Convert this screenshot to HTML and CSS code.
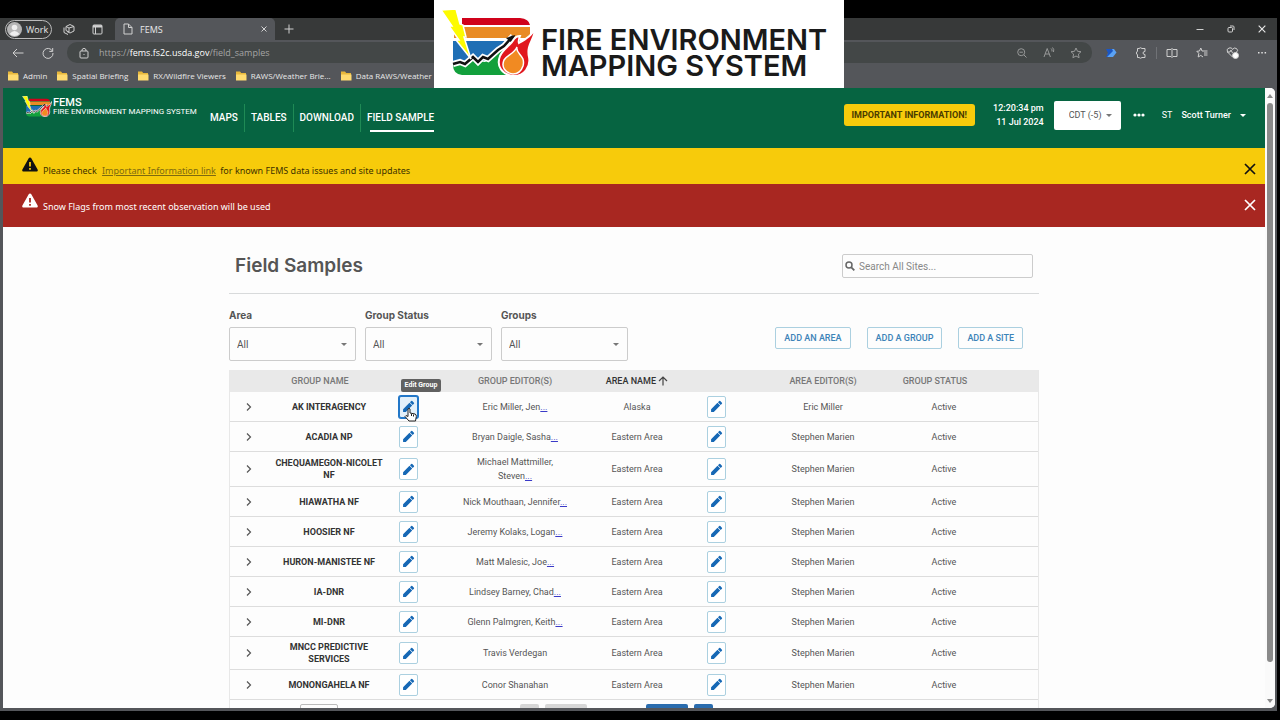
FILE: index.html
```html
<!DOCTYPE html>
<html lang="en">
<head>
  <meta charset="UTF-8">
  <title>FEMS</title>
  <link rel="stylesheet" href="styles.css">
</head>
<body>

  <!-- Icons -->
  <svg class="sprite" width="0" height="0">
    <symbol id="i-folder" viewBox="0 0 12 11"><path d="M1 1.500h4l1.200 1.500H11v7H1z" fill="#e8b83c"/><path d="M1 4.500h10.500V10.500H1z" fill="#ffdb70"/></symbol>
    <symbol id="i-pencil" viewBox="0 0 24 24"><path fill="currentColor" d="M2 17V22h5L18.800 10.200l-5-5zM22 7a1.400 1.400 0 0 0 0-2L19 2a1.400 1.400 0 0 0-2 0l-2.300 2.300 5 5z"/></symbol>
    <symbol id="i-chevron" viewBox="0 0 8 10"><path d="M2 1.500l3.500 3.500L2 8.500" fill="none" stroke="currentColor" stroke-width="1.200"/></symbol>
    <symbol id="i-close" viewBox="0 0 12 12"><path d="M1 1l10 10M11 1L1 11" fill="none" stroke="currentColor" stroke-width="1.700"/></symbol>
    <symbol id="i-warn" viewBox="0 0 16 15"><path fill="currentColor" d="M8 0.500c.6 0 1 .3 1.300.8l6.300 11.200c.6 1-.1 2-1.200 2H1.600c-1.100 0-1.800-1-1.200-2L6.700 1.300C7 .8 7.400.5 8 .5z"/><path class="warn-mark" d="M8 5v4.500M8 11v1.800" stroke-width="1.800"/></symbol>
    <symbol id="i-fems" viewBox="0 0 96 68">
      <path d="M22 9H80Q89 10 90 16H22z" fill="#d0021b"/>
      <path d="M14 18H90V29H14z" fill="#e98b25"/>
      <path d="M13 32H88V52H13z" fill="#1f6fb5"/>
      <path d="M13 56L30 51 45 53 60 42 80 28V66H22Q13 65 13 56z" fill="#12a03c"/>
      <path d="M13 55l7-2 5 2 8-7 5 5 5-5 5 2 10-9 6-4 9-10" fill="none" stroke="#fff" stroke-width="6"/>
      <path d="M13 55l7-2 5 2 8-7 5 5 5-5 5 2 10-9 6-4 9-10" fill="none" stroke="#111" stroke-width="2.600"/>
      <path d="M66 29l9-3-2 9z" fill="#111"/>
      <path d="M95 18C96 30 86 34 89 48 91 58 84 67 74 67 62 66 56 57 60 47 63 40 71 36 74 30 76 27 79 27 80 27 79 30 78 32 79 34 86 30 93 26 95 18z" fill="#e1171e" stroke="#fff" stroke-width="2"/>
      <path d="M77 38C75 45 86 46 83 57 81 63 77 65 73 65 65 64 61 58 64 51 67 46 74 45 77 38z" fill="#f18a22" stroke="#fff" stroke-width="1.500"/>
      <path d="M1 1L16 0 20 15 23 16 26 28 24 28 31 50 16 31 19 31 9 17 12 17z" fill="#fdfb00" stroke="#fff" stroke-width="1.500"/>
    </symbol>
  </svg>

  <div class="window">

    <!-- Tabs -->
    <div class="tabs">
      <button class="profile">
        <svg width="15" height="15" viewBox="0 0 15 15"><circle cx="7.500" cy="7.500" r="7.500" fill="#b5b5b5"/><circle cx="7.500" cy="5.500" r="2.800" fill="#eee"/><path d="M2.500 12q5-6 10 0-5 4-10 0z" fill="#eee"/></svg>
        Work
      </button>
      <div class="tabs__tools">
        <svg width="12" height="12" viewBox="0 0 12 12" class="line"><path d="M3 3.500l4-2 4 2v4.500l-4 2-3-1.500M3 3.500v4l3 1.500V5zM6 5l5-1.500M1 4.500v5l4 2"/></svg>
        <svg width="11" height="11" viewBox="0 0 11 11" class="line"><rect x="1" y="1" width="9" height="9" rx="1"/><path d="M1 2.300h9" stroke-width="2.400"/><path d="M3.500 3v7"/></svg>
      </div>
      <div class="tab">
        <svg width="10" height="12" viewBox="0 0 10 12" class="line"><path d="M1 1h4.500L9 4.500V11H1zM5.500 1v3.500H9"/></svg>
        <span class="tab__title">FEMS</span>
        <svg width="6" height="6"><use href="#i-close"/></svg>
      </div>
      <svg class="plus line" width="10" height="10" viewBox="0 0 10 10"><path d="M5 0.500v9M0.500 5h9"/></svg>
      <div class="controls">
        <svg width="8" height="8" viewBox="0 0 8 8" class="line"><path d="M0.500 4.500h7"/></svg>
        <svg width="8" height="8" viewBox="0 0 8 8" class="line"><rect x="1" y="2.500" width="4.500" height="4.500" rx="1"/><path d="M3 1h3q1 0 1 1v3"/></svg>
        <svg width="8" height="8"><use href="#i-close"/></svg>
      </div>
    </div>

    <!-- Address bar -->
    <div class="toolbar">
      <div class="toolbar__nav">
        <svg width="12" height="10" viewBox="0 0 12 10" class="line"><path d="M11.500 5H1M5 1L1 5l4 4"/></svg>
        <svg width="12" height="12" viewBox="0 0 12 12" class="line"><path d="M10.500 4.200A5 5 0 1 0 11 6M10.700 1v3.400H7.300"/></svg>
      </div>
      <div class="address">
        <svg width="10" height="12" viewBox="0 0 10 12" class="line"><rect x="1" y="4" width="8" height="7" rx="1"/><path d="M3 4V2.500q2-2.500 4 0V4M5 7v1"/></svg>
        <span class="address__url">https://<b>fems.fs2c.usda.gov</b>/field_samples</span>
        <div class="address__tools">
          <svg width="10" height="10" viewBox="0 0 10 10" class="line"><circle cx="4.200" cy="4.200" r="3.500"/><path d="M7 7l2.500 2.500M2.500 4.200h3.400"/></svg>
          <svg width="12" height="11" viewBox="0 0 12 11" class="line"><path d="M1 10l3.200-8.500L7.400 10M2.200 7h4M8 1.500q1.500 1 1 3M9.500 0.500q2 2 1 4.500"/></svg>
          <svg width="12" height="12" viewBox="0 0 12 12" class="line"><path d="M6 1l1.500 3.300 3.500.4-2.600 2.400.7 3.600L6 9l-3.100 1.700.7-3.600L1 4.700l3.500-.4z"/></svg>
        </div>
      </div>
      <div class="toolbar__ext">
        <svg width="12" height="10" viewBox="0 0 12 10"><path d="M4 1h5l2.500 3.500L8 9H2z" fill="#5aa2f5"/><path d="M1 1h6l1 2-6 6H1l2-4z" fill="#1b56c4"/></svg>
        <svg width="12" height="12" viewBox="0 0 12 12" class="line"><path d="M4 1.500q1.500-1.500 3 0h3v3q-2 0-2 1.500T10 7.500v3H7q-1.500 1.500-3 0H2.500V8Q0 6 2.500 4V1.500z"/></svg>
      </div>
      <div class="toolbar__ext toolbar__ext--split">
        <svg width="12" height="10" viewBox="0 0 12 10" class="line"><path d="M5 1.500H1v7h4M7 1.500h4v7H7M6 0v10"/></svg>
        <svg width="12" height="11" viewBox="0 0 12 11" class="line"><path d="M8 4L6 4 4.800 1 3.500 4 .8 4.300l2 2L2.200 10l2.600-1.600L7 10M8 4h3.500M8 6h3.500M8 8h3.500"/></svg>
        <svg width="13" height="12" viewBox="0 0 13 12" class="line"><path d="M6.500 10L1.500 5Q0 2 3 1t3.500 1.500Q8 0 10.500 1.500T10 6M1 5h3l1-2 1.500 3"/><circle cx="9.500" cy="8.500" r="3" fill="#fff"/></svg>
        <svg width="10" height="4" viewBox="0 0 10 4"><path d="M1 1h1.500v1.500H1zM4.300 1h1.500v1.500H4.300zM7.600 1h1.500v1.500H7.600z" fill="#e0e0e0"/></svg>
      </div>
    </div>

    <!-- Bookmarks -->
    <div class="bookmarks">
      <a href="#"><svg width="12" height="11"><use href="#i-folder"/></svg>Admin</a>
      <a href="#"><svg width="12" height="11"><use href="#i-folder"/></svg>Spatial Briefing</a>
      <a href="#"><svg width="12" height="11"><use href="#i-folder"/></svg>RX/Wildfire Viewers</a>
      <a href="#"><svg width="12" height="11"><use href="#i-folder"/></svg>RAWS/Weather Brie...</a>
      <a href="#"><svg width="12" height="11"><use href="#i-folder"/></svg>Data RAWS/Weather</a>
    </div>

    <div class="viewport">
      <div class="page">

        <!-- Header -->
        <header class="header">
          <div class="logo">
            <svg width="30" height="21"><use href="#i-fems"/></svg>
            <div class="logo__text"><strong>FEMS</strong><span>FIRE ENVIRONMENT MAPPING SYSTEM</span></div>
          </div>
          <nav class="nav">
            <a href="#">MAPS</a>
            <a href="#">TABLES</a>
            <a href="#">DOWNLOAD</a>
            <a href="#" class="active">FIELD SAMPLE</a>
          </nav>
          <div class="header__right">
            <button class="info-btn">IMPORTANT INFORMATION!</button>
            <div class="clock">12:20:34 pm<br>11 Jul 2024</div>
            <div class="select select--zone">
              <select aria-label="CDT (-5)"><option>CDT (-5)</option></select>
            </div>
            <svg width="12" height="4" viewBox="0 0 12 4"><circle cx="2" cy="2" r="1.600" fill="#fff"/><circle cx="6" cy="2" r="1.600" fill="#fff"/><circle cx="10" cy="2" r="1.600" fill="#fff"/></svg>
            <span class="initials">ST</span>
            <button class="user">Scott Turner</button>
          </div>
        </header>

        <!-- Alerts -->
        <div class="alert alert--yellow">
          <svg width="16" height="15"><use href="#i-warn"/></svg>
          <p>Please check <a href="#">Important Information link</a> for known FEMS data issues and site updates</p>
          <button class="alert__close"><svg width="12" height="12"><use href="#i-close"/></svg></button>
        </div>
        <div class="alert alert--red">
          <svg width="16" height="15"><use href="#i-warn"/></svg>
          <p>Snow Flags from most recent observation will be used</p>
          <button class="alert__close"><svg width="12" height="12"><use href="#i-close"/></svg></button>
        </div>

        <main class="content">
          <div class="content__head">
            <h1>Field Samples</h1>
            <label class="search">
              <svg width="10" height="10" viewBox="0 0 10 10"><circle cx="4" cy="4" r="3" fill="none" stroke="#666" stroke-width="1.500"/><path d="M6.300 6.300L9.300 9.300" stroke="#666" stroke-width="1.800"/></svg>
              <input type="text" placeholder="Search All Sites...">
            </label>
          </div>

          <!-- Filters -->
          <div class="filters">
            <div class="filter">
              <label for="area">Area</label>
              <div class="select"><select id="area"><option>All</option></select></div>
            </div>
            <div class="filter">
              <label for="status">Group Status</label>
              <div class="select"><select id="status"><option>All</option></select></div>
            </div>
            <div class="filter">
              <label for="groups">Groups</label>
              <div class="select"><select id="groups"><option>All</option></select></div>
            </div>
            <div class="actions">
              <button>ADD AN AREA</button>
              <button>ADD A GROUP</button>
              <button>ADD A SITE</button>
            </div>
          </div>

          <!-- Groups table -->
          <table class="groups">
            <colgroup>
              <col class="c-open"><col class="c-name"><col class="c-edit"><col class="c-editors">
              <col class="c-area"><col class="c-edit2"><col class="c-areaed"><col class="c-status">
            </colgroup>
            <thead>
              <tr>
                <th></th>
                <th class="shift">GROUP NAME</th>
                <th></th>
                <th>GROUP EDITOR(S)</th>
                <th class="sorted">AREA NAME <svg width="10" height="10" viewBox="0 0 10 10"><path d="M5 9.500V1M1 5l4-4 4 4" fill="none" stroke="#444" stroke-width="1.200"/></svg></th>
                <th></th>
                <th>AREA EDITOR(S)</th>
                <th class="status shift">GROUP STATUS</th>
              </tr>
            </thead>
            <tbody id="rows"></tbody>
          </table>

          <div class="pager">
            <select class="pager__size"></select>
            <button class="pager__first" disabled></button>
            <button class="pager__prev" disabled></button>
            <button class="pager__next"></button>
            <button class="pager__last"></button>
          </div>
        </main>
      </div>

      <!-- Scrollbar -->
      <div class="scroll">
        <span class="scroll__up"></span>
        <span class="scroll__thumb"></span>
        <span class="scroll__down"></span>
      </div>
    </div>
  </div>

  <div class="banner">
    <svg width="96" height="68"><use href="#i-fems"/></svg>
    <div>FIRE ENVIRONMENT<br>MAPPING SYSTEM</div>
  </div>

  <script>
    // name, editors, has more editors, area, area editor
    const groups = [
      ["AK INTERAGENCY", "Eric Miller, Jen", true, "Alaska", "Eric Miller"],
      ["ACADIA NP", "Bryan Daigle, Sasha", true, "Eastern Area", "Stephen Marien"],
      ["CHEQUAMEGON-NICOLET NF", "Michael Mattmiller, Steven", true, "Eastern Area", "Stephen Marien"],
      ["HIAWATHA NF", "Nick Mouthaan, Jennifer", true, "Eastern Area", "Stephen Marien"],
      ["HOOSIER NF", "Jeremy Kolaks, Logan", true, "Eastern Area", "Stephen Marien"],
      ["HURON-MANISTEE NF", "Matt Malesic, Joe", true, "Eastern Area", "Stephen Marien"],
      ["IA-DNR", "Lindsey Barney, Chad", true, "Eastern Area", "Stephen Marien"],
      ["MI-DNR", "Glenn Palmgren, Keith", true, "Eastern Area", "Stephen Marien"],
      ["MNCC PREDICTIVE SERVICES", "Travis Verdegan", false, "Eastern Area", "Stephen Marien"],
      ["MONONGAHELA NF", "Conor Shanahan", false, "Eastern Area", "Stephen Marien"]
    ];

    const pencil = '<svg width="13" height="13"><use href="#i-pencil"/></svg>';
    const hover = `<span class="tooltip">Edit Group</span>
      <svg class="cursor" width="13" height="16" viewBox="0 0 13 16"><path d="M4 9V2q1-1.500 2 0v4l5 1q1.500.5 1.300 2.500L11.500 14H5L1 9.500Q1.500 7.500 4 9.500z" fill="#fff" stroke="#222"/><path d="M7.500 7v2M9.500 7.500v2" stroke="#222"/></svg>`;

    document.getElementById("rows").innerHTML = groups.map((g, i) => `
      <tr>
        <td><svg width="8" height="10"><use href="#i-chevron"/></svg></td>
        <td class="name">${g[0]}</td>
        <td><div class="edit-wrap"><button class="edit ${i === 0 ? "edit--focus" : ""}">${pencil}</button>${i === 0 ? hover : ""}</div></td>
        <td class="editors">${g[1]}${g[2] ? '<a href="#">...</a>' : ""}</td>
        <td>${g[3]}</td>
        <td><button class="edit">${pencil}</button></td>
        <td>${g[4]}</td>
        <td class="status">Active</td>
      </tr>`).join("");
  </script>
</body>
</html>
```

FILE: styles.css
```css
* {
  box-sizing: border-box;
}

body {
  margin: 0;
  height: 100vh;
  padding: 18px 3px 9px 0;
  background: #000;
  font-family: Roboto, "Liberation Sans", sans-serif;
  font-size: 9px;
  overflow: hidden;
}

svg {
  display: block;
  flex: none;
}

.sprite {
  position: absolute;
}

button,
select,
input {
  font: inherit;
  color: inherit;
  margin: 0;
  padding: 0;
  border: 0;
  background: none;
}

.line {
  fill: none;
  stroke: #d0d0d0;
  stroke-width: 1;
}

/* Browser window */
.window {
  height: 100%;
  display: flex;
  flex-direction: column;
  padding: 0 2px 3px 3px;
  background: #54565a;
}

.tabs,
.toolbar,
.bookmarks {
  display: flex;
  align-items: center;
  flex: none;
  margin: 0 -2px 0 -3px;
  font-family: "Open Sans", "Noto Sans", sans-serif;
  color: #e8e8e8;
}

.tabs {
  height: 22px;
  padding-left: 5px;
  background: #373939;
}

.profile {
  display: flex;
  align-items: center;
  gap: 4px;
  width: 47px;
  height: 19px;
  padding-left: 1px;
  border: 1px solid #bbb;
  border-radius: 10px;
}

.tabs__tools {
  display: flex;
  align-items: center;
  gap: 17px;
  width: 63px;
  padding-left: 11px;
}

.tab {
  display: flex;
  align-items: center;
  gap: 7px;
  width: 160px;
  height: 22px;
  padding: 0 8px;
  border-radius: 5px 5px 0 0;
  background: #54565a;
}

.tab__title {
  flex: 1;
}

.plus {
  margin-left: 9px;
}

.controls {
  display: flex;
  gap: 23px;
  margin-left: auto;
  padding-right: 11px;
}

.toolbar {
  height: 25px;
}

.toolbar__nav {
  display: flex;
  align-items: center;
  gap: 18px;
  width: 67px;
  padding-left: 12px;
}

.address {
  flex: 1;
  display: flex;
  align-items: center;
  gap: 10px;
  height: 21px;
  padding: 0 3px 0 12px;
  border-radius: 10px;
  background: #434747;
}

.address__url {
  margin-right: auto;
  color: #a5a5a5;
}

.address__url b {
  font-weight: 400;
  color: #fff;
}

.address__tools,
.toolbar__ext {
  display: grid;
  grid-auto-flow: column;
  grid-auto-columns: 27px;
  place-items: center;
}

.address__tools {
  opacity: 0.6;
}

.toolbar__ext {
  grid-auto-columns: 30px;
  margin-left: 4px;
}

.toolbar__ext--split {
  margin-left: 0;
  border-left: 1px solid #707276;
}

.bookmarks {
  gap: 9px;
  height: 23px;
  padding: 0 0 2px 7px;
  font-size: 8px;
}

.bookmarks a {
  display: flex;
  align-items: center;
  gap: 4px;
  color: inherit;
  text-decoration: none;
}

/* Logo banner over the window */
.banner {
  position: absolute;
  top: 0;
  left: 434px;
  display: flex;
  gap: 5px;
  width: 410px;
  height: 88px;
  padding: 9px 0 0 6px;
  background: #fff;
  font: 600 29px/26px Inter, sans-serif;
  color: #1a1a1a;
  white-space: nowrap;
}

.banner div {
  padding-top: 18px;
}

.viewport {
  flex: 1;
  min-height: 0;
  display: flex;
  background: #fdfdfd;
  border-radius: 0 5px 5px 0;
  overflow: hidden;
}

.page {
  flex: 1;
  overflow: hidden;
}

.scroll {
  display: flex;
  flex-direction: column;
  align-items: center;
  width: 10px;
  padding: 6px 0 5px;
  background: #fafafa;
}

.scroll__up,
.scroll__down {
  border: 3px solid transparent;
  border-top: 0;
  border-bottom: 4px solid #8a8a8a;
}

.scroll__down {
  border-bottom: 0;
  border-top: 4px solid #8a8a8a;
  margin-top: auto;
}

.scroll__thumb {
  flex: 0 0 559px;
  width: 6px;
  margin-top: 5px;
  border-radius: 3px;
  background: #8a8a8a;
}

/* Header */
.header {
  display: flex;
  height: 60px;
  padding: 0 19px;
  background: #066441;
  color: #fff;
}

.logo {
  display: flex;
  gap: 1px;
  width: 181px;
  padding-top: 8px;
}

.logo__text {
  display: flex;
  flex-direction: column;
  font-size: 8px;
  line-height: 8px;
  padding-top: 2px;
  white-space: nowrap;
}

.logo__text strong {
  font-size: 11px;
  line-height: 10px;
  font-weight: 500;
}

.nav {
  display: flex;
  align-items: center;
  font-size: 10px;
  font-weight: 500;
}

.nav a {
  height: 28px;
  line-height: 28px;
  padding: 0 6px;
  color: #fff;
  text-decoration: none;
  border-right: 1px solid #1f8a55;
}

.nav a:first-child {
  padding-left: 7px;
}

.nav .active {
  border-right: 0;
  padding-right: 0;
}

.nav .active::after {
  content: "";
  display: block;
  height: 2px;
  margin: -2px 0 0 3px;
  background: #fff;
}

.header__right {
  display: flex;
  align-items: center;
  height: 54px;
  margin-left: auto;
}

.info-btn {
  width: 131px;
  height: 22px;
  border-radius: 3px;
  background: #f7cb0b;
  color: #4a3c00;
  font-weight: 700;
}

.clock {
  width: 69px;
  font-weight: 500;
  line-height: 14px;
  text-align: right;
}

.select--zone {
  width: 67px;
  margin: 0 12px 0 10px;
  color: #555;
}

.header .select select {
  height: 29px;
  padding-left: 15px;
  border: 0;
  background: #fff;
}

.initials {
  margin: 0 9px 0 17px;
}

.user {
  display: flex;
  align-items: center;
  gap: 9px;
  font-weight: 500;
}

.user::after {
  content: "";
  border: 3px solid transparent;
  border-top-color: #fff;
  border-bottom: 0;
}

/* Alerts */
.alert {
  display: flex;
  align-items: flex-start;
  padding: 9px 9px 0 19px;
  font-family: "Noto Sans", sans-serif;
}

.alert p {
  flex: 1;
  margin: 0;
  padding: 7px 0 0 5px;
  line-height: 14px;
}

.alert a {
  margin: 0 2px 0 3px;
  color: #7d6a10;
}

.alert--yellow {
  --mark: #f7cb0b;
  height: 36px;
  background: #f7cb0b;
  color: #3d3200;
}

.alert--yellow > svg,
.alert--yellow .alert__close {
  color: #111;
}

.alert--red {
  --mark: #a82721;
  height: 43px;
  background: #a82721;
  color: #fff;
}

.warn-mark {
  stroke: var(--mark);
}

.alert__close {
  margin-top: 6px;
}

/* Content */
.content {
  max-width: 810px;
  margin: 0 auto;
  padding-top: 27px;
  color: #555;
}

.content__head {
  display: flex;
  align-items: center;
  justify-content: space-between;
  padding: 0 6px 15px;
  border-bottom: 1px solid #d8dadb;
}

h1 {
  margin: 0;
  font: 600 19px/24px Inter, sans-serif;
}

.search {
  display: flex;
  align-items: center;
  gap: 4px;
  width: 191px;
  height: 24px;
  padding: 0 2px;
  border: 1px solid #ccc;
  border-radius: 2px;
}

.search input {
  flex: 1;
  min-width: 0;
  font-size: 10px;
}

.search input::placeholder {
  color: #888;
}

.filters {
  display: flex;
  gap: 9px;
  padding: 14px 0 9px;
}

.filter {
  width: 127px;
}

.filter label {
  display: block;
  margin-bottom: 5px;
  font: 700 10px/14px Inter, sans-serif;
}

.select {
  display: grid;
  align-items: center;
}

.select select {
  grid-area: 1 / 1;
  width: 100%;
  height: 34px;
  padding-left: 7px;
  border: 1px solid #ccc;
  border-radius: 2px;
  appearance: none;
  font-size: 10px;
}

.select--zone select {
  font-size: 9px;
}

.select::after {
  content: "";
  grid-area: 1 / 1;
  justify-self: end;
  margin-right: 9px;
  border: 3px solid transparent;
  border-top-color: #777;
  border-bottom: 0;
  pointer-events: none;
}

.actions {
  display: flex;
  align-items: flex-start;
  gap: 16px;
  margin-left: auto;
  padding: 19px 16px 0 0;
}

.actions button {
  height: 22px;
  padding: 0 8px;
  border: 1px solid #abd0e0;
  border-radius: 2px;
  color: #3c83b8;
  font-weight: 500;
}

/* Table */
.groups {
  width: 100%;
  table-layout: fixed;
  border-collapse: separate;
  border-spacing: 0;
  border: solid #e8e8e8;
  border-width: 0 1px;
  text-align: center;
}

.c-open { width: 37px; }
.c-name { width: 124px; }
.c-edit { width: 35px; }
.c-editors { width: 178px; }
.c-area { width: 66px; }
.c-edit2 { width: 93px; }
.c-areaed { width: 120px; }

.groups th {
  height: 22px;
  padding: 0;
  background: #e9e9e9;
  color: #777;
  font-weight: 500;
  white-space: nowrap;
}

.groups td {
  height: 30px;
  padding: 3px 0;
  border-bottom: 1px solid #ddd;
  line-height: 14px;
}

.groups td > svg {
  margin: 0 auto;
}

.groups .name {
  padding: 4px 6px;
  font-weight: 700;
  line-height: 12px;
  color: #333;
}

.groups .editors {
  padding: 3px 36px;
}

.groups .editors a {
  color: #3a3ac8;
}

.groups .status {
  padding-right: 33px;
}

.groups th.shift {
  padding-right: 18px;
}

.groups th.status.shift {
  padding-right: 51px;
}

.groups th.sorted {
  color: #333;
}

.sorted svg {
  display: inline-block;
  vertical-align: middle;
}

.edit {
  display: flex;
  align-items: center;
  justify-content: center;
  width: 19px;
  height: 22px;
  margin: 0 auto;
  border: 1px solid #abd0e0;
  border-radius: 2px;
  background: #fff;
  color: #1668b5;
}

.edit--focus {
  border-color: #2277c8;
  background: #e3f0fa;
  box-shadow: 0 0 0 1px #2277c8;
}

.edit-wrap {
  position: relative;
}

.tooltip {
  position: absolute;
  left: 10px;
  bottom: 26px;
  width: 40px;
  border-radius: 2px;
  background: #616161;
  color: #fff;
  font-size: 7px;
  font-weight: 700;
  line-height: 13px;
}

.cursor {
  position: absolute;
  left: 13px;
  top: 11px;
}

/* Pager */
.pager {
  display: flex;
  align-items: flex-start;
  gap: 6px;
  height: 30px;
  padding: 4px 0 0 70px;
  border: solid #e8e8e8;
  border-width: 0 1px;
}

.pager__size {
  width: 38px;
  height: 22px;
  margin-right: 176px;
  border: 1px solid #bbb;
  border-radius: 2px;
  appearance: none;
}

.pager button {
  width: 19px;
  height: 22px;
  border-radius: 2px;
  background: #2a6cae;
}

.pager button:disabled {
  background: #d6d6d6;
}

.pager .pager__prev,
.pager .pager__next {
  width: 42px;
}

.pager .pager__next {
  margin-left: 53px;
}
```
